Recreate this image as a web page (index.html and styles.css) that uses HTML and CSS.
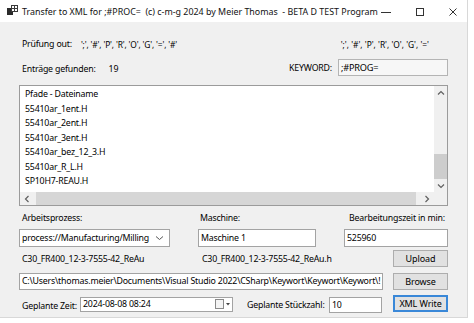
FILE: index.html
```html
<!DOCTYPE html>
<html lang="de">
<head>
<meta charset="utf-8">
<title>Transfer to XML</title>
<link rel="stylesheet" href="styles.css">
</head>
<body>
<div class="window">
  <div class="titlebar">
    <svg class="app-icon" width="11" height="11" viewBox="0 0 11 11">
      <rect x="0" y="3" width="6" height="7" fill="#2b2b2b"/>
      <rect x="4" y="0" width="7" height="7" fill="#3a3a3a"/>
      <rect x="5" y="1" width="2" height="2" fill="#fff"/>
      <rect x="8" y="1" width="2" height="2" fill="#fff"/>
      <rect x="5" y="4" width="2" height="2" fill="#fff"/>
      <rect x="8" y="4" width="2" height="2" fill="#fff"/>
    </svg>
    <span class="title">Transfer to XML for ;#PROC=&nbsp; (c) c-m-g 2024 by Meier Thomas &nbsp;- BETA D TEST Program</span>
    <div class="controls">
      <svg width="10" height="8" viewBox="0 0 10 8"><line x1="0" y1="4.5" x2="10" y2="4.5" stroke="#333" stroke-width="1"/></svg>
      <svg width="8" height="8" viewBox="0 0 8 8"><rect x="0.5" y="0.5" width="7" height="7" fill="none" stroke="#333" stroke-width="1"/></svg>
      <svg width="8" height="8" viewBox="0 0 8 8"><path d="M0.5 0.5 L7.5 7.5 M7.5 0.5 L0.5 7.5" stroke="#333" stroke-width="1"/></svg>
    </div>
  </div>
  <div class="client">
    <div class="row row-check">
      <span class="lbl">Prüfung out:</span>
      <span class="val">';', '#', 'P', 'R', 'O', 'G', '=', '#'</span>
      <span class="right-val">';', '#', 'P', 'R', 'O', 'G', '='</span>
    </div>
    <div class="row row-found">
      <span class="lbl">Entr&auml;ge gefunden:</span>
      <span class="count">19</span>
      <span class="kw-lbl">KEYWORD:</span>
      <div class="textbox kw-box">;#PROG=</div>
    </div>
    <div class="listbox">
      <div class="list-main">
        <ul class="items">
          <li>Pfade - Dateiname</li>
          <li>55410ar_1ent.H</li>
          <li>55410ar_2ent.H</li>
          <li>55410ar_3ent.H</li>
          <li>55410ar_bez_12_3.H</li>
          <li>55410ar_R_L.H</li>
          <li>SP10H7-REAU.H</li>
        </ul>
        <div class="vscroll">
          <svg class="arr" width="8" height="6" viewBox="0 0 8 6"><path d="M1 4.5 L4 1.5 L7 4.5" fill="none" stroke="#606060" stroke-width="1.2"/></svg>
          <div class="vtrack"><div class="vthumb"></div></div>
          <svg class="arr" width="8" height="6" viewBox="0 0 8 6"><path d="M1 1.5 L4 4.5 L7 1.5" fill="none" stroke="#606060" stroke-width="1.2"/></svg>
        </div>
      </div>
      <div class="hscroll-row">
        <div class="hscroll">
          <svg class="harr" width="6" height="8" viewBox="0 0 6 8"><path d="M4.5 1 L1.5 4 L4.5 7" fill="none" stroke="#606060" stroke-width="1.2"/></svg>
          <div class="hthumb"></div>
          <svg class="harr" width="6" height="8" viewBox="0 0 6 8"><path d="M1.5 1 L4.5 4 L1.5 7" fill="none" stroke="#606060" stroke-width="1.2"/></svg>
        </div>
        <div class="corner"></div>
      </div>
    </div>

    <div class="grid3 labels">
      <span class="lbl">Arbeitsprozess:</span>
      <span class="lbl l2">Maschine:</span>
      <span class="lbl l3">Bearbeitungszeit in min:</span>
    </div>
    <div class="grid3 inputs">
      <div class="textbox combo">
        <span>process://Manufacturing/Milling</span>
        <svg width="9" height="6" viewBox="0 0 9 6"><path d="M1 1.5 L4.5 4.5 L8 1.5" fill="none" stroke="#555" stroke-width="1"/></svg>
      </div>
      <div class="textbox">Maschine 1</div>
      <div class="textbox">525960</div>
    </div>
    <div class="row row-file">
      <span class="lbl file1">C30_FR400_12-3-7555-42_ReAu</span>
      <span class="lbl file2">C30_FR400_12-3-7555-42_ReAu.h</span>
      <button class="btn">Upload</button>
    </div>
    <div class="row row-path">
      <div class="textbox path"><span class="clip">C:\Users\thomas.meier\Documents\Visual Studio 2022\CSharp\Keywort\Keywort\Keywort\!</span></div>
      <button class="btn">Browse</button>
    </div>
    <div class="row row-plan">
      <span class="lbl zeit-lbl">Geplante Zeit:</span>
      <div class="textbox date">
        <span>2024-08-08 08:24</span>
        <span class="cal">
          <svg width="15" height="10" viewBox="0 0 15 10"><rect x="0.5" y="0.5" width="8" height="9" fill="#f4f4f4" stroke="#8a8a8a"/><path d="M11 4 L15 4 L13 6.5 Z" fill="#444"/></svg>
        </span>
      </div>
      <span class="lbl stk-lbl">Geplante Stückzahl:</span>
      <div class="textbox stk">10</div>
      <button class="btn btn-default">XML Write</button>
    </div>
  </div>
</div>
</body>
</html>
```
FILE: styles.css
```css
* { box-sizing: border-box; }
html, body { margin: 0; padding: 0; background: #ffffff; }
body {
  font-family: "Noto Sans", "Open Sans", sans-serif;
  font-size: 9px;
  color: #000;
  width: 474px;
  height: 323px;
  overflow: hidden;
}
.window {
  width: 468px;
  height: 318px;
  background: #f0f0f0;
  border-right: 1px solid #d8d8d8;
  border-bottom: 1px solid #d8d8d8;
  display: flex;
  flex-direction: column;
}
.titlebar {
  height: 22px;
  background: #ffffff;
  display: flex;
  align-items: center;
  padding-left: 7px;
}
.app-icon { margin-right: 4px; margin-top: -1px; }
.title {
  font-size: 8.9px;
  white-space: nowrap;
  color: #111;
}
.controls {
  margin-left: auto;
  display: flex;
  align-items: center;
  gap: 25px;
  padding-right: 10px;
  margin-top: 1px;
}
.client {
  flex: 1;
  padding: 0 19px 0 19px;
  display: flex;
  flex-direction: column;
  font-size: 8.8px;
  letter-spacing: -0.2px;
}
.row { display: flex; align-items: center; }
.lbl { white-space: nowrap; }
.row-check { margin-top: 14px; height: 16px; padding-left: 3px; }
.row-check .val { margin-left: 9px; font-size: 8.4px; letter-spacing: -0.15px; }
.row-check .right-val { margin-left: auto; margin-right: 19px; font-size: 8.4px; letter-spacing: 0; }
.row-found { margin-top: 7px; height: 17px; padding-left: 3px; }
.row-found .lbl { padding-top: 3px; }
.count { margin-left: 13px; padding-top: 3px; }
.kw-lbl { margin-left: auto; margin-right: 6px; padding-top: 1px; }
.textbox {
  background: #ffffff;
  border: 1px solid #a3a3a3;
  height: 17px;
  line-height: 15px;
  padding-left: 2px;
  white-space: nowrap;
  overflow: hidden;
}
.kw-box { width: 110px; background: #f7f7f7; border-color: #b4b4b4; font-size: 9.2px; }

.listbox {
  margin-top: 9px;
  height: 121px;
  border: 1px solid #9b9b9b;
  background: #fff;
  display: flex;
  flex-direction: column;
}
.list-main { flex: 1; display: flex; min-height: 0; }
.items {
  list-style: none;
  margin: 0;
  padding: 1px 0 0 5px;
  flex: 1;
  overflow: hidden;
}
.items li { height: 14.5px; line-height: 14.5px; white-space: nowrap; }
.vscroll {
  width: 13px;
  background: #f0f0f0;
  display: flex;
  flex-direction: column;
  align-items: center;
  padding: 4px 0 3px;
}
.vtrack { flex: 1; width: 100%; display: flex; flex-direction: column; justify-content: flex-end; padding: 3px 0 4px; }
.vthumb { height: 25px; background: #cdcdcd; }
.hscroll-row { display: flex; height: 13px; }
.hscroll {
  flex: 1;
  background: #f0f0f0;
  display: flex;
  align-items: center;
  padding: 0 4px;
}
.hthumb { flex: 1; height: 100%; background: #d6d6d6; margin: 0 8px 0 6px; }
.corner { width: 13px; background: #f0f0f0; }

.grid3 {
  display: grid;
  grid-template-columns: 151px 118px 104px;
  column-gap: 28px;
}
.labels { margin-top: 5px; height: 14px; line-height: 14px; }
.labels .lbl { padding-left: 3px; }
.labels .l2 { padding-left: 2px; }
.labels .l3 { padding-left: 5px; }
.inputs { margin-top: 4px; }
.inputs .textbox { height: 18px; line-height: 16px; }
.combo { display: flex; align-items: center; justify-content: space-between; padding-right: 5px; }
.combo svg { flex: none; }

.row-file { margin-top: 3px; height: 17px; }
.file1 { padding-left: 3px; width: 183px; }
.btn {
  margin-left: auto;
  width: 55px;
  height: 17px;
  background: #e1e1e1;
  border: 1px solid #adadad;
  font-family: inherit;
  font-size: 9px;
  letter-spacing: -0.1px;
  color: #000;
  padding: 0;
  line-height: 14px;
  white-space: nowrap;
}
.row-path { margin-top: 6px; height: 17px; }
.path { width: 364px; height: 17px; display: flex; }
.path .clip { display: block; overflow: hidden; white-space: nowrap; flex: 1; min-width: 0; }
.row-plan { margin-top: 5px; height: 17px; }
.zeit-lbl { padding-left: 3px; width: 61px; padding-top: 5px; }
.date {
  width: 153px;
  height: 15px;
  line-height: 13px;
  display: flex;
  justify-content: space-between;
  align-items: center;
  padding-right: 2px;
  margin-top: 1px;
}
.cal { display: flex; }
.stk-lbl { margin-left: 14px; width: 82px; padding-top: 2px; }
.stk { width: 53px; height: 16px; line-height: 14px; margin-top: 2px; }
.btn-default { border: 2px solid #3a88d8; }
```
